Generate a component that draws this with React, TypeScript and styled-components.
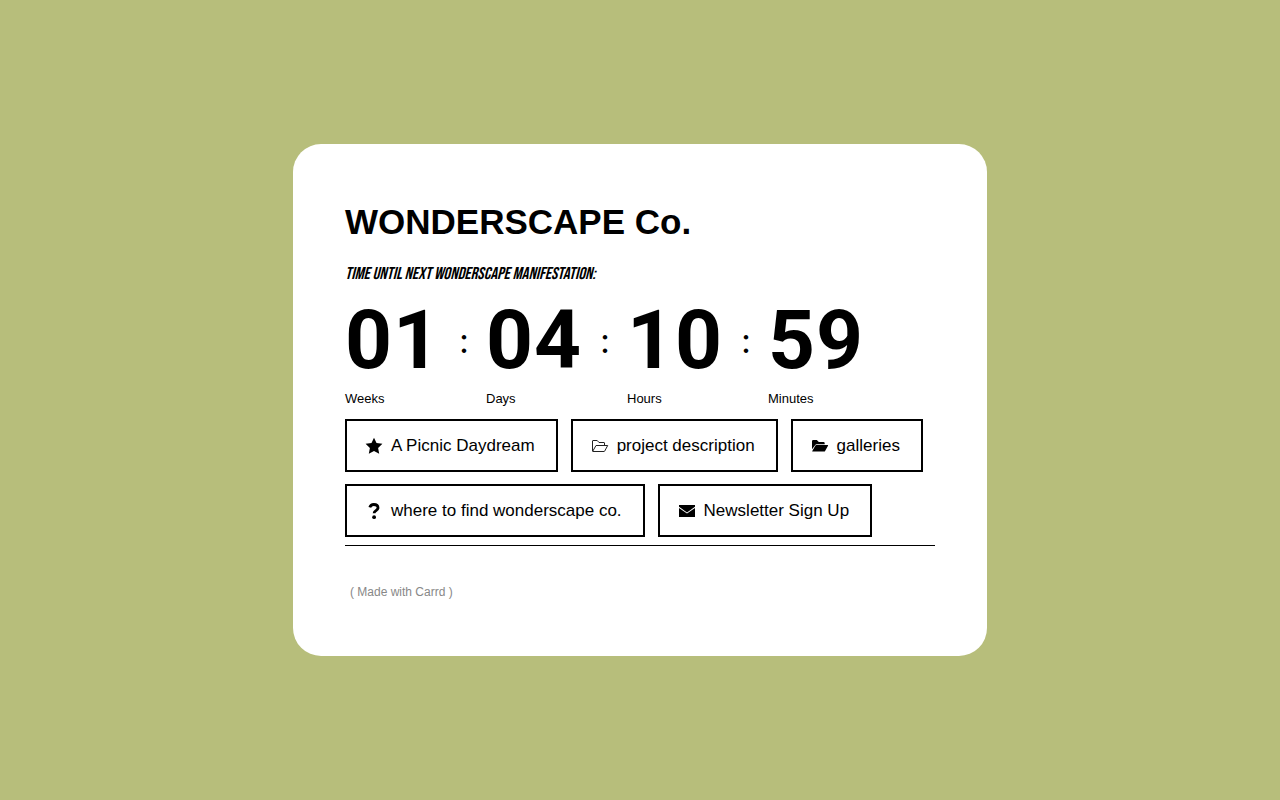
import React from "react";
import styled, { createGlobalStyle } from "styled-components";

const GlobalStyle = createGlobalStyle`
  *, *::before, *::after { box-sizing: border-box; }
  body {
    margin: 0;
    background: #b7be7b;
    color: #000;
    font-family: "Liberation Sans", Arial, sans-serif;
  }
`;

const Page = styled.div`
  display: flex;
  align-items: center;
  justify-content: center;
  min-height: 100vh;
  padding: 32px;
`;

const Card = styled.main`
  width: 100%;
  max-width: 694px;
  padding: 52px 52px 54px;
  border-radius: 28px;
  background: #fff;
`;

const Title = styled.h1`
  margin: 0;
  font-size: 35px;
  line-height: 52px;
  font-weight: 700;
`;

const Subtitle = styled.p`
  margin: 16px 0 0;
  font-family: "Bebas Neue", "Liberation Sans Narrow", "Liberation Sans", sans-serif;
  font-size: 17px;
  line-height: 20px;
  font-weight: 400;
  font-style: italic;
  text-transform: uppercase;
`;

const Countdown = styled.div`
  display: flex;
  flex-wrap: wrap;
  margin-top: 7px;
`;

const Unit = styled.div`
  display: grid;
  grid-template-columns: 97px 44px;
`;

const Value = styled.span`
  font-family: Roboto, "Liberation Sans", sans-serif;
  font-size: 82px;
  line-height: 98px;
  font-weight: 700;
  letter-spacing: 1px;
`;

const Separator = styled.span`
  align-self: center;
  text-align: center;
  font-family: "Liberation Serif", serif;
  font-size: 38px;
  line-height: 48px;
`;

const UnitLabel = styled.span`
  grid-column: 1;
  font-size: 13px;
  line-height: 20px;
`;

const Links = styled.nav`
  display: flex;
  flex-wrap: wrap;
  gap: 12px 13px;
  margin-top: 10px;
`;

const LinkButton = styled.a`
  display: flex;
  align-items: center;
  gap: 8px;
  height: 53px;
  padding: 0 21px 0 18px;
  border: 2px solid #000;
  color: #000;
  font-size: 17px;
  line-height: 24px;
  text-decoration: none;
  white-space: nowrap;
`;

const Icon = styled.svg`
  flex: none;
  width: 18px;
  height: 18px;
`;

const Divider = styled.hr`
  margin: 8px 0 0;
  border: 0;
  border-top: 1px solid #000;
`;

const Credit = styled.footer`
  margin-top: 36px;
  padding-left: 5px;
  font-size: 12px;
  line-height: 20px;

  a {
    color: #888;
    text-decoration: none;
  }
`;

const units = [
  { value: "01", label: "Weeks" },
  { value: "04", label: "Days" },
  { value: "10", label: "Hours" },
  { value: "59", label: "Minutes" },
];

const StarIcon = () => (
  <Icon viewBox="0 0 18 18" aria-hidden="true">
    <path d="M9 .7 11.5 6l5.9.8-4.3 4.1 1.1 5.9L9 14l-5.2 2.8 1.1-5.9L.6 6.8 6.5 6z" />
  </Icon>
);

const FolderOutlineIcon = () => (
  <Icon viewBox="0 0 18 18" fill="none" stroke="#222" strokeWidth="1" strokeLinejoin="round" aria-hidden="true">
    <path d="M1.5 14.2V4q0-.5.5-.5h4.2L8 5.500h5q.5 0 .5.500v2" />
    <path d="M1.700 14.300 5 8.500h11.700l-3 5.600q-.2.400-.7.400H2q-.3 0-.3-.2z" />
  </Icon>
);

const FolderIcon = () => (
  <Icon viewBox="0 0 18 18" aria-hidden="true">
    <path d="M1 12.200V4.200Q1 3 2.200 3h3.600l2 2h4.700q1.200 0 1.200 1.200v1.100H5.600q-1 0-1.500.9z" />
    <path d="M1.600 14.500q-.6 0-.3-.6l3-5.200q.3-.6 1-.6h11.400q.7 0 .3.700l-2.900 5.100q-.3.600-1 .6z" />
  </Icon>
);

const QuestionIcon = () => (
  <Icon viewBox="0 0 18 18" aria-hidden="true">
    <path d="M4.800 5.400Q5.700 2.500 8.800 2.500c2.600 0 4.200 1.400 4.200 3.300 0 2.900-3.900 2.900-3.900 5.500" fill="none" stroke="#000" strokeWidth="2.800" />
    <circle cx="9.100" cy="15.200" r="1.900" />
  </Icon>
);

const MailIcon = () => (
  <Icon viewBox="0 0 18 18" aria-hidden="true">
    <path d="M1 3h16v1.800L9 10.400 1 4.800z" />
    <path d="M1 6.100l8 5.500 8-5.500V15H1z" />
  </Icon>
);

const links = [
  { label: "A Picnic Daydream", icon: <StarIcon /> },
  { label: "project description", icon: <FolderOutlineIcon /> },
  { label: "galleries", icon: <FolderIcon /> },
  { label: "where to find wonderscape co.", icon: <QuestionIcon /> },
  { label: "Newsletter Sign Up", icon: <MailIcon /> },
];

export default function App() {
  return (
    <Page>
      <GlobalStyle />
      <Card>
        <Title>WONDERSCAPE Co.</Title>
        <Subtitle>Time until next wonderscape manifestation:</Subtitle>
        <Countdown role="timer">
          {units.map((unit, i) => (
            <Unit key={unit.label}>
              <Value>{unit.value}</Value>
              {i < units.length - 1 && <Separator>:</Separator>}
              <UnitLabel>{unit.label}</UnitLabel>
            </Unit>
          ))}
        </Countdown>
        <Links>
          {links.map((link) => (
            <LinkButton key={link.label} href="#">
              {link.icon}
              {link.label}
            </LinkButton>
          ))}
        </Links>
        <Divider />
        <Credit>
          <a href="#">( Made with Carrd )</a>
        </Credit>
      </Card>
    </Page>
  );
}
